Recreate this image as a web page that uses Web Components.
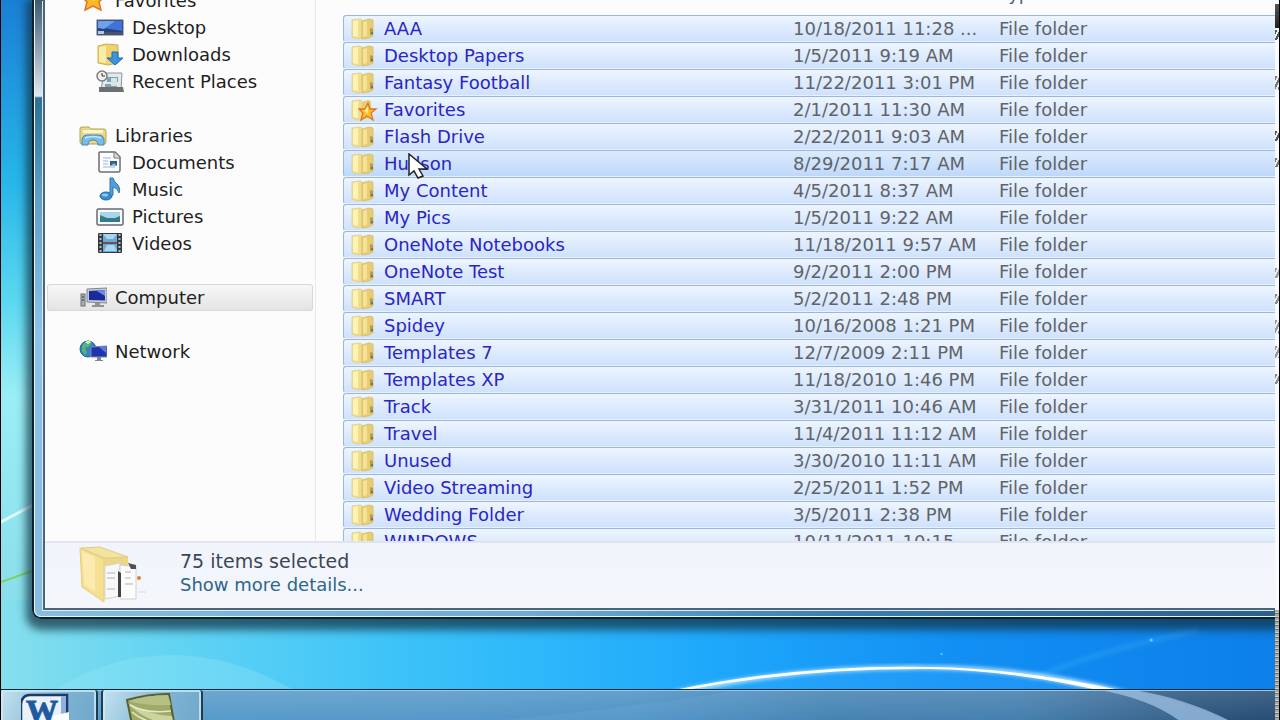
<!DOCTYPE html>
<html lang="en">
<head>
<meta charset="utf-8">
<title>Windows Explorer</title>
<style>
html, body { height: 100%; margin: 0; }
body { font-family: "DejaVu Sans", "Noto Sans", sans-serif; font-size: 18px; line-height: 26px; color: #222; overflow: hidden; background: #000; }
</style>
</head>
<body>
<desktop-screen>
  <explorer-window>
    <nav-group slot="nav">
      <nav-item icon="star" root>Favorites</nav-item>
      <nav-item icon="desktop">Desktop</nav-item>
      <nav-item icon="downloads">Downloads</nav-item>
      <nav-item icon="recent">Recent Places</nav-item>
    </nav-group>
    <nav-group slot="nav">
      <nav-item icon="libraries" root>Libraries</nav-item>
      <nav-item icon="document">Documents</nav-item>
      <nav-item icon="music">Music</nav-item>
      <nav-item icon="pictures">Pictures</nav-item>
      <nav-item icon="videos">Videos</nav-item>
    </nav-group>
    <nav-group slot="nav"><nav-item icon="computer" root selected>Computer</nav-item></nav-group>
    <nav-group slot="nav"><nav-item icon="network" root>Network</nav-item></nav-group>
    <file-list slot="files"></file-list>
    <details-pane slot="details"></details-pane>
  </explorer-window>
  <task-bar slot="taskbar"></task-bar>
</desktop-screen>

<script>
const ICONS = {
  star: '<path d="M14 0l4 8 8 1-6 6 2 8-8-4-8 4 2-8-6-6 8-1z" fill="#fdb827" stroke="#e0762a" stroke-width="1.5"/><path d="M14 4l2 6 6 0-8 4z" fill="#ffe27a"/>',
  desktop: '<rect x="1" y="6" width="26" height="15" fill="#27427c" stroke="#54658a"/><path d="M2 7h24v10l-24-4z" fill="#3f74d6"/><path d="M2 7h17L8 15l-6-1z" fill="#6fa0ee"/><rect x="2" y="18" width="24" height="3" fill="#4a5468"/><rect x="2" y="17" width="6" height="3" fill="#b5c8dd"/>',
  downloads: '<path d="M2 5l8-2 12 1v18l-10 2-10-2z" fill="#eed271" stroke="#cfae4e"/><path d="M3 6l7-1v17l-7-1z" fill="#f9ecaa"/><path d="M16 11h6v6h5l-8 7-8-7h5z" fill="#3d94dc" stroke="#1e68ac"/>',
  recent: '<path d="M8 5h18l-1 17H5z" fill="#e3e8ea" stroke="#8b979c"/><path d="M11 9h11v5H11zM9 16h12v3H9z" fill="#7fa3ae"/><path d="M15 10h6v8h-6z" fill="#d6e4e6"/><path d="M3 19h24l1 5H3z" fill="#6d7071"/><circle cx="6" cy="8" r="5" fill="#f0f0ec" stroke="#7c7c7c" stroke-width="1.5"/><path d="M6 5v3h3" fill="none" stroke="#333"/>',
  libraries: '<path d="M1 7q0-2 2-2h7l2 2h13q2 0 2 2v11q0 2-2 2H3q-2 0-2-2z" fill="#e9d687" stroke="#b9a552"/><path d="M4 8h20v3H4z" fill="#fbf6cc"/><path d="M3 23v-6q1-4 5-4h12q4 0 5 4v6h-6q0-5-5-5t-5 5z" fill="#79bce9" stroke="#4487b9"/><path d="M6 16q8-3 16 0" fill="none" stroke="#c7e9fb" stroke-width="1.5"/>',
  document: '<path d="M3 4q0-1 1-1h15l5 5v13q0 2-2 2H5q-2 0-2-2z" fill="#fbfcfd" stroke="#6b6e73" stroke-width="1.5"/><path d="M18 3v6h6" fill="#d8dde2" stroke="#74787e"/><path d="M7 9h8M7 12h5M7 15h5M7 18h12" stroke="#9bb7cf"/><path d="M14 12h7v5h-7z" fill="#2f5f8c"/><path d="M14 17l4-3 3 3z" fill="#92bcd8"/>',
  music: '<ellipse cx="10" cy="20" rx="6" ry="4" fill="#358ed2" stroke="#1f6bad"/><ellipse cx="9" cy="19" rx="3" ry="1.5" fill="#8ecbf2"/><path d="M14 20V2h3q1 4 5 7 3 4 1 8-1-5-6-6v8z" fill="#4e9fda" stroke="#2975b4"/>',
  pictures: '<rect x="1" y="6" width="26" height="16" rx="1.5" fill="#fafafa" stroke="#666b70" stroke-width="1.5"/><rect x="4" y="9" width="20" height="10" fill="#a8d4ec"/><path d="M4 12l7 3 8 0 5-2v6H4z" fill="#3f8068"/><path d="M4 16h20v3H4z" fill="#2f78a5"/>',
  videos: '<rect x="2" y="3" width="24" height="20" rx="1" fill="#36393d"/><rect x="7" y="4" width="14" height="18" fill="#69abd8"/><path d="M7 4h14l-4 5h-6zM8 21l3-6h7l3 6z" fill="#a9d5ef"/><path d="M7 13h14" stroke="#7d2b2b" stroke-width="1.5"/><path d="M4.500 4v18M23.500 4v18" stroke="#b6bdc2" stroke-width="2" stroke-dasharray="2 2"/>',
  computer: '<rect x="2" y="10" width="4" height="12" fill="#a9adb0" stroke="#6c7073"/><path d="M3 13h2M3 16h2" stroke="#333"/><path d="M8 5l20-1v15L8 18z" fill="#c6cbd2" stroke="#80868f"/><path d="M10 7l16-1v10.500L10 16z" fill="#1a2a9c"/><path d="M17 6.500l9-.5v6z" fill="#6d87ec"/><path d="M16 19h5v2h4v2H13v-2h3z" fill="#8e9499"/>',
  network: '<circle cx="9" cy="11" r="8" fill="#3a7fc6" stroke="#26619f"/><path d="M4 6q5-5 9-2l-2 4-5 2 2 5-2 2Q1 12 4 6z" fill="#53b76c"/><path d="M6 4q4-2 6 0l-3 2z" fill="#d4f1e8"/><path d="M12 9l16-1v11H12z" fill="#1f35b0" stroke="#7f88a2"/><path d="M20 9l7-.5V15z" fill="#5c78e8"/><path d="M18 19h4v3h2v1h-8v-1h2z" fill="#80868c"/>',
  folder: '<path d="M2 5l8-1 2 1v18l-4 1-6-2z" fill="#f1dd8c" stroke="#e2cd80" stroke-width=".8"/><path d="M3 6l5-1v17l-5-1z" fill="#fbf3b8"/><path d="M12 6l7-2 4 1v16l-4 2-7 1z" fill="#e6cd72" stroke="#d6bd68" stroke-width=".8"/><path d="M13 7l4-1v15l-4 1z" fill="#f3e298"/><path d="M20 13l3 1v6h-3z" fill="#b79c4d"/><circle cx="22" cy="18" r="1" fill="#4a6b99"/>',
  favfolder: '<path d="M2 5l8-1 2 1v18l-4 1-6-2z" fill="#f1dd8c" stroke="#e2cd80" stroke-width=".8"/><path d="M3 6l5-1v17l-5-1z" fill="#fbf3b8"/><path d="M12 6l6-2 3 1v16l-9 3z" fill="#e6cd72"/><path d="M18 7l2 6 6 0-5 4 2 7-6-4-6 4 2-7-4-4h6z" fill="#ffc02e" stroke="#dd7426" stroke-width="1.300"/><path d="M18 10v8l-4-3z" fill="#ffe888"/>'
};
const icon = name => `<svg width="28" height="27" viewBox="0 0 28 27" aria-hidden="true">${ICONS[name]}</svg>`;
const define = (name, render) => customElements.define(name, class extends HTMLElement {
  connectedCallback() {
    if (!this.shadowRoot) this.attachShadow({ mode: 'open' }).innerHTML = render(this);
  }
});

define('desktop-screen', () => `
<style>
:host { display: grid; grid-template-rows: minmax(0, 1fr) 31px; height: 100vh; box-sizing: border-box; border: solid #000; border-width: 0 1px; position: relative; overflow: hidden; }
.wall { position: absolute; inset: 0; width: 100%; height: 100%; }
.stage { position: relative; display: flex; min-height: 0; padding: 0 4px 70px 31px; }
::slotted(explorer-window) { flex: 1; min-width: 0; }
.edge { position: absolute; right: 0; top: 0; bottom: 0; width: 4px; background: repeating-linear-gradient(#c9ced2 0 1px, #77716c 1px 2px, #a5a9a0 2px 4px); }
.edge::before { content: ""; display: block; height: 610px; background:
 linear-gradient(#555,#222) 0 4px/4px 24px no-repeat,
 repeating-linear-gradient(115deg, #555 0 2px, #eee 2px 4px) 0 30px/4px 10px no-repeat,
 repeating-linear-gradient(115deg, #777 0 2px, #eee 2px 4px) 0 76px/4px 14px no-repeat,
 repeating-linear-gradient(115deg, #555 0 2px, #eee 2px 4px) 0 131px/4px 10px no-repeat,
 repeating-linear-gradient(115deg, #777 0 2px, #eee 2px 4px) 0 158px/4px 9px no-repeat,
 repeating-linear-gradient(115deg, #999 0 2px, #eee 2px 4px) 0 268px/4px 10px no-repeat,
 repeating-linear-gradient(115deg, #888 0 2px, #eee 2px 4px) 0 294px/4px 10px no-repeat,
 repeating-linear-gradient(115deg, #999 0 2px, #eee 2px 4px) 0 320px/4px 14px no-repeat,
 repeating-linear-gradient(115deg, #999 0 2px, #eee 2px 4px) 0 346px/4px 12px no-repeat,
 repeating-linear-gradient(115deg, #888 0 2px, #eee 2px 4px) 0 374px/4px 10px no-repeat,
 #f8fafc; }
</style>
<svg class="wall" viewBox="0 0 1280 720" preserveAspectRatio="none" aria-hidden="true">
<defs>
<linearGradient id="v" x2="0" y2="1"><stop offset="0" stop-color="#1a7fd4"/><stop offset=".25" stop-color="#27b5ea"/><stop offset=".42" stop-color="#5cd8f0"/><stop offset=".55" stop-color="#9aeef6"/><stop offset=".8" stop-color="#8ce0ec"/><stop offset="1" stop-color="#80dcf0"/></linearGradient>
<linearGradient id="h"><stop offset="0" stop-color="#86dfec"/><stop offset=".12" stop-color="#65d5f2"/><stop offset=".33" stop-color="#39c1f9"/><stop offset=".55" stop-color="#1fa9fb"/><stop offset=".75" stop-color="#128ff4"/><stop offset="1" stop-color="#0c7fe8"/></linearGradient>
<filter id="b"><feGaussianBlur stdDeviation="2"/></filter>
</defs>
<rect width="1280" height="720" fill="url(#v)"/><rect y="600" width="1280" height="120" fill="url(#h)"/>
<path d="M0 582l34-12" stroke="#83cf63" stroke-width="2"/><path d="M0 522l34-18" stroke="#dffafa" stroke-width="3"/>
<path d="M40 700Q100 655 170 655T310 700z" fill="#9de9f8" opacity=".3"/>
<path d="M680 690Q900 640 1150 700z" fill="#37aaff" opacity=".35"/>
<path d="M1030 680Q1100 650 1200 630" fill="none" stroke="#3ba8fa" stroke-width="5" opacity=".4" filter="url(#b)"/>
<path d="M670 692Q800 664 930 666Q1030 666 1130 692L1104 692Q1020 670 930 669Q800 668 690 692z" fill="#d9f6ff" filter="url(#b)"/>
<path d="M670 691Q800 664 930 667Q1020 668 1125 691L1104 691Q1010 670 930 669Q800 668 680 691z" fill="#fff"/>
<circle cx="1152" cy="640" r="1.500" fill="#74d2ff"/><circle cx="942" cy="654" r="1" fill="#74d2ff"/>
</svg>
<div class="stage"><slot></slot></div>
<slot name="taskbar"></slot>
<div class="edge"></div>`);

define('explorer-window', () => `
<style>
:host { display: flex; box-sizing: border-box; border: solid #10222e; border-width: 0 0 2px 2px; border-radius: 0 0 0 9px; box-shadow: 0 5px 8px 6px rgba(20,50,65,.72); }
.glass { flex: 1; display: flex; min-width: 0; box-sizing: border-box; padding: 0 0 6px 8px; border: solid #e4f5fd; border-width: 0 0 1px 1px; border-radius: 0 0 0 7px;
 background: linear-gradient(#3f5a70, #dfe9f1 96px, #2c7093 98px, #5d9dc4 190px, #8cc2e8 330px, transparent 560px), linear-gradient(90deg, #88bce0, #6fabd6 40%, #3d7eb0 65%, #2c5f8c); }
.client { flex: 1; min-width: 0; display: flex; flex-direction: column; border: solid #4b6478; border-width: 0 0 2px 2px; background: #fcfcfd; box-shadow: -1px 1px #d5ecf9; }
.panes { flex: 1; display: flex; min-height: 0; overflow: hidden; }
nav { flex: 0 0 271px; box-sizing: border-box; border-right: 1px solid #e6e9f2; display: flex; flex-direction: column; gap: 27px; margin-top: -13px; padding: 0 2px; }
.files { flex: 1; min-width: 0; padding-left: 27px; margin-top: -13px; }
</style>
<div class="glass"><div class="client">
<div class="panes"><nav><slot name="nav"></slot></nav><div class="files"><slot name="files"></slot></div></div>
<slot name="details"></slot>
</div></div>`);

define('nav-group', () => `<style>:host { display: flex; flex-direction: column; }</style><slot></slot>`);

define('nav-item', el => `
<style>
:host { display: block; }
a { display: flex; align-items: center; gap: 8px; height: 27px; box-sizing: border-box; padding-left: 49px; color: #1e1e22; text-decoration: none; border-radius: 3px; }
:host([root]) a { padding-left: 32px; }
:host([selected]) a { background: linear-gradient(#f8f8f8, #e3e3e4); box-shadow: inset 0 0 0 1px #d8d8da; }
svg { flex: none; }
</style>
<a href="#">${icon(el.getAttribute('icon'))}<span><slot></slot></span></a>`);

const FILES = [
 ['AAA','10/18/2011 11:28 ...'],['Desktop Papers','1/5/2011 9:19 AM'],['Fantasy Football','11/22/2011 3:01 PM'],['Favorites','2/1/2011 11:30 AM'],
 ['Flash Drive','2/22/2011 9:03 AM'],['Hudson','8/29/2011 7:17 AM'],['My Content','4/5/2011 8:37 AM'],['My Pics','1/5/2011 9:22 AM'],
 ['OneNote Notebooks','11/18/2011 9:57 AM'],['OneNote Test','9/2/2011 2:00 PM'],['SMART','5/2/2011 2:48 PM'],['Spidey','10/16/2008 1:21 PM'],
 ['Templates 7','12/7/2009 2:11 PM'],['Templates XP','11/18/2010 1:46 PM'],['Track','3/31/2011 10:46 AM'],['Travel','11/4/2011 11:12 AM'],
 ['Unused','3/30/2010 11:11 AM'],['Video Streaming','2/25/2011 1:52 PM'],['Wedding Folder','3/5/2011 2:38 PM'],['WINDOWS','10/11/2011 10:15']
];
define('file-list', () => `
<style>
:host { display: block; }
table { width: 100%; table-layout: fixed; border-collapse: separate; border-spacing: 0; white-space: nowrap; }
th { height: 28px; padding: 0 0 0 1px; box-sizing: border-box; font-weight: 400; text-align: left; vertical-align: top; color: #4c607a; line-height: 14px; }
td { height: 27px; box-sizing: border-box; padding: 0; line-height: 24px; color: #606468; border-top: 1px solid #9db8d4; border-bottom: 1px solid #e6f0fe; background: linear-gradient(#edf5ff, #cfe1fc); }
td:first-child { border-left: 1px solid #9db8d4; border-radius: 3px 0 0 3px; color: #2a25c4; }
tr.hover td { background: linear-gradient(#dcebfd, #bfd8fa); }
.name { display: flex; align-items: center; gap: 6px; height: 25px; padding-left: 6px; }
.name svg { flex: none; }
.n { width: 450px; } .d { width: 206px; }
.cursor { position: absolute; left: 407px; top: 153px; }
</style>
<table>
<colgroup><col class="n"><col class="d"><col></colgroup>
<thead><tr><th></th><th></th><th scope="col">Type</th></tr></thead>
<tbody>${FILES.map(([n, d]) => `<tr${n === 'Hudson' ? ' class="hover"' : ''}><td><div class="name">${icon(n === 'Favorites' ? 'favfolder' : 'folder')}<span>${n}</span></div></td><td>${d}</td><td>File folder</td></tr>`).join('')}</tbody>
</table>
<svg class="cursor" width="22" height="30" viewBox="0 0 22 30" aria-hidden="true"><path d="M1 1v21l5-4 4 7 5-2-4-7h8z" fill="#fff" stroke="#222" stroke-width="1.500"/></svg>`);

define('details-pane', () => `
<style>
:host { display: flex; gap: 32px; height: 67px; box-sizing: border-box; padding: 0 0 0 33px; border-top: 2px solid #dfe4ef; background: linear-gradient(#f1f4fb, #f4f6fc); }
.info { display: flex; flex-direction: column; padding-top: 5px; line-height: 26px; }
.info span { color: #3d4656; font-size: 19px; line-height: 26px; }
a { color: #2c6688; text-decoration: none; line-height: 22px; }
svg { flex: none; }
</style>
<svg width="70" height="65" viewBox="0 0 70 65" aria-hidden="true">
<path d="M24 5l26 9v12L24 22z" fill="#ecd784"/><path d="M3 5l23 10 24-1L22 4z" fill="#f4e3a0" stroke="#e0cd8c"/>
<path d="M52 20l5 3v26h-5z" fill="#fff"/><circle cx="61" cy="35" r="2" fill="#d5843c"/>
<path d="M27 23l15-3v33l-15 3z" fill="#f8f8f8" stroke="#d4d4d4"/><path d="M42 22l16 2v32l-16 0z" fill="#fcfcfc" stroke="#d0d0d0"/>
<path d="M50 20l8 2v4h-5z" fill="#56504a"/><path d="M40 28l3 2v24h-3z" fill="#444"/>
<path d="M29 30h8M29 35h8M29 46h8M47 29h6M47 35h6M47 41h8" stroke="#b0b0b0"/><path d="M60 49h8" stroke="#d8dce4"/>
<path d="M2 5l24 11v43L4 44z" fill="#f5df90" stroke="#e6ce7c"/><path d="M4 8l13 6v34L6 42z" fill="#fbebae"/>
</svg>
<div class="info"><span>75 items selected</span><a href="#">Show more details...</a></div>`);

define('task-bar', () => `
<style>
:host { position: relative; display: flex; gap: 3px; border-top: 1px solid #14293a; margin-right: 4px; overflow: hidden; box-shadow: inset 0 1px #9cc7e4;
 background: linear-gradient(#ffffff22, transparent), linear-gradient(90deg, #5a9cc8, #5598c9 35%, #4d92c5 50%, #3c7bab 65%, #3a76a5 80%, #2d5a84 90%, #274d75); }
.sweep { position: absolute; inset: 0; width: 100%; height: 100%; }
button { position: relative; width: 97px; height: 40px; padding: 0; border: 2px solid #1f3c50; border-top: 0; border-radius: 3px; box-shadow: inset 0 0 0 2px #d0e8f5cc; background: linear-gradient(115deg, #c3e2f0, #7eb2d0 60%, #6ea8cc); display: flex; justify-content: center; }
button:first-of-type { border-left: 0; }
button + button { width: 102px; }
svg { flex: none; }
</style>
<svg class="sweep" viewBox="0 0 1280 31" preserveAspectRatio="none" aria-hidden="true"><path d="M500 31Q640 18 740 0H1130Q1200 14 1230 31z" fill="#8cc0ea" opacity=".14"/><path d="M1104 0h34q50 8 95 31h-50q-30-22-79-31z" fill="#a5c8ea" opacity=".7"/></svg>
<button aria-label="Word"><svg width="56" height="40" viewBox="4 0 56 40"><path d="M4 14q1-9 9-9h37v35H4z" fill="#e9f2fb" stroke="#1c3a6a" stroke-width="2.500"/><path d="M44 6h5v30h-5z" fill="#92aede"/><text x="9" y="32" font-family="Liberation Serif" font-weight="700" font-size="32" fill="#1e5a9e" stroke="#1e5a9e">W</text><path d="M36 26l16-4v18H36z" fill="#fff"/></svg></button>
<button aria-label="Camtasia"><svg width="56" height="40" viewBox="0 0 56 40"><path d="M3 10q20-6 42-6l7 40H10z" fill="#9eaa68" stroke="#56602f" stroke-width="2"/><path d="M4 13q20 12 44 13l2 10Q18 30 4 13z" fill="#ccd39c"/><path d="M4 11q20-6 40-6l3 10Q20 16 4 11z" fill="#b7c084"/><path d="M6 15q16 9 41 6M8 22q14 12 40 14" fill="none" stroke="#e6e9c4" stroke-width="1.500"/></svg></button>`);
</script>
</body>
</html>
